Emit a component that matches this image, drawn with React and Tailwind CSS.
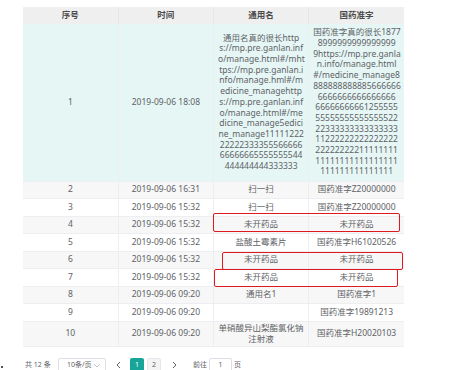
import React from "react";

const nameLines = [
    "通用名真的很长http",
    "s://mp.pre.ganlan.inf",
    "o/manage.html#/mht",
    "tps://mp.pre.ganlan.i",
    "nfo/manage.hml#/m",
    "edicine_managehttp",
    "s://mp.pre.ganlan.inf",
    "o/manage.html#/me",
    "dicine_manage5edici",
    "ne_manage11111222",
    "22222333355566666",
    "66666665555555544",
    "444444444333333",
];

const codeLines = [
    "国药准字真的很长1877",
    "8999999999999999",
    "9https://mp.pre.ganla",
    "n.info/manage.html",
    "#/medicine_manage8",
    "888888888885666666",
    "6666666666666666",
    "66666666661255555",
    "55555555555555522",
    "22333333333333333",
    "11222222222222222",
    "22222222211111111",
    "11111111111111111",
    "111111111111111",
];

const rows = [
    {no: 2, time: "2019-09-06 16:31", name: ["扫一扫"], code: "国药准字Z20000000"},
    {no: 3, time: "2019-09-06 15:32", name: ["扫一扫"], code: "国药准字Z20000000"},
    {no: 4, time: "2019-09-06 15:32", name: ["未开药品"], code: "未开药品"},
    {no: 5, time: "2019-09-06 15:32", name: ["盐酸土霉素片"], code: "国药准字H61020526"},
    {no: 6, time: "2019-09-06 15:32", name: ["未开药品"], code: "未开药品"},
    {no: 7, time: "2019-09-06 15:32", name: ["未开药品"], code: "未开药品"},
    {no: 8, time: "2019-09-06 09:20", name: ["通用名1"], code: "国药准字1"},
    {no: 9, time: "2019-09-06 09:20", name: [], code: "国药准字19891213"},
    {no: 10, time: "2019-09-06 09:20", name: ["单硝酸异山梨酯氯化钠", "注射液"], code: "国药准字H20020103"},
];

function Lines({lines}) {
    return lines.map((l, i) => (
        <div key={i} className="whitespace-nowrap">{l}</div>
    ));
}

function Chevron({dir}) {
    const d = dir === "left" ? "M6 2 L3 5 L6 8" : dir === "right" ? "M4 2 L7 5 L4 8" : "M2 4 L5 7 L8 4";
    return (
        <svg width="10" height="10" viewBox="0 0 10 10" className="shrink-0">
            <path d={d} fill="none" stroke="currentColor" strokeWidth="1"/>
        </svg>
    );
}

export default function App() {
    const cell = "border-r border-b border-[#eceef2] px-[4px] py-0 text-center align-middle";

    return (
        <div
            className="relative w-[474px] h-[370px] overflow-hidden bg-white text-[#606266]"
            style={{fontFamily: '"Noto Sans", "Noto Sans CJK SC", sans-serif'}}
        >
            <div className="pt-[7px] pl-[23px]">
                <table className="w-[381px] table-fixed border-collapse text-[8.5px] leading-[10.7px]">
                    <thead>
                        <tr className="bg-[#efefef] h-[17px]">
                            {["序号", "时间", "通用名", "国药准字"].map((h) => (
                                <th key={h} className="p-0 font-bold text-[#4a4a4a] text-center align-middle border-r border-[#e6e6e6] last:border-r-0">
                                    {h}
                                </th>
                            ))}
                        </tr>
                    </thead>
                    <tbody>
                        <tr className="bg-[#e6f6f5] h-[157px]">
                            <td className={cell}>1</td>
                            <td className={cell}>2019-09-06 18:08</td>
                            <td className={cell}><Lines lines={nameLines}/></td>
                            <td className={cell + " border-r-0"}><Lines lines={codeLines}/></td>
                        </tr>
                        {rows.map((r, i) => (
                            <tr key={r.no} className={(i % 2 === 0 ? "bg-[#f7f7f7] " : "bg-white ") + (r.no === 10 ? "h-[25px]" : "h-[17.5px]")}>
                                <td className={cell}>{r.no}</td>
                                <td className={cell}>{r.time}</td>
                                <td className={cell}><Lines lines={r.name}/></td>
                                <td className={cell + " border-r-0"}>{r.code}</td>
                            </tr>
                        ))}
                    </tbody>
                </table>

                {/* pagination */}
                <div className="mt-[11px] flex items-center text-[7px] leading-none text-[#606266] h-[14px] whitespace-nowrap">
                    <span className="ml-[2px] w-[27px]">共 12 条</span>
                    <div className="ml-[6px] w-[48px] h-[14px] border border-[#dcdfe6] rounded-[2px] flex items-center justify-between pl-[8px] pr-[4px]">
                        <span>10条/页</span>
                        <span className="text-[#c0c4cc]"><Chevron dir="down"/></span>
                    </div>
                    <span className="ml-[8px]"><Chevron dir="left"/></span>
                    <div className="ml-[6px] w-[14px] h-[14px] bg-[#16a598] text-white rounded-[2px] flex items-center justify-center">1</div>
                    <div className="ml-[3px] w-[14px] h-[14px] bg-[#f4f4f5] border border-[#e4e7ed] rounded-[2px] flex items-center justify-center">2</div>
                    <span className="ml-[8px]"><Chevron dir="right"/></span>
                    <span className="ml-[14px]">前往</span>
                    <div className="ml-[2px] w-[23px] h-[14px] border border-[#dcdfe6] rounded-[2px] flex items-center justify-center">1</div>
                    <span className="ml-[2px]">页</span>
                </div>
            </div>

            {/* red annotation boxes */}
            <div className="absolute left-[213px] top-[213px] w-[187px] h-[19px] border-[1.5px] border-[#e0191f] rounded-[2px]"/>
            <div className="absolute left-[222px] top-[252px] w-[181px] h-[18px] border-[1.5px] border-[#e0191f] rounded-[2px]"/>
            <div className="absolute left-[214px] top-[269px] w-[184px] h-[18px] border-[1.5px] border-[#e0191f] rounded-[2px]"/>

            <div className="absolute left-[1px] top-[366px] w-[2px] h-[2px] bg-[#555]"/>
        </div>
    );
}
